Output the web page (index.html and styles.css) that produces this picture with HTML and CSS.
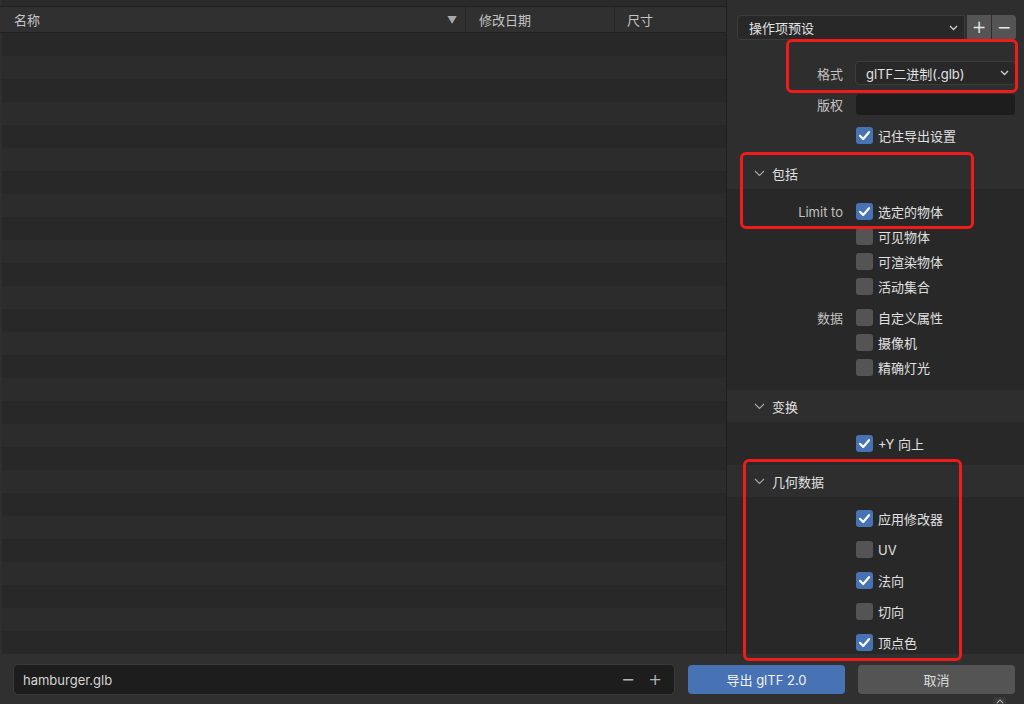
FILE: index.html
```html
<!DOCTYPE html>
<html lang="zh-CN">
<head>
    <meta charset="UTF-8">
    <title>Blender 导出 glTF 2.0</title>
    <link rel="stylesheet" href="styles.css">
</head>
<body>
    <div class="app">
        <div class="browser">
            <div class="list-head">
                <div class="col col-name">名称<span class="sort">▼</span></div>
                <div class="col col-date">修改日期</div>
                <div class="col col-size">尺寸</div>
            </div>
            <div class="list-body"></div>
        </div>

        <div class="sidebar">
            <div class="main-panel">
                <div class="preset-row">
                    <div class="select preset">
                        <span>操作项预设</span>
                        <svg class="caret" viewBox="0 0 9 6"><path d="M1 1l3.5 3.5L8 1"/></svg>
                    </div>
                    <button class="tool-btn">+</button>
                    <button class="tool-btn">−</button>
                </div>

                <div class="prop-row format-row">
                    <span class="label">格式</span>
                    <div class="select">
                        <span>glTF二进制(.glb)</span>
                        <svg class="caret" viewBox="0 0 9 6"><path d="M1 1l3.5 3.5L8 1"/></svg>
                    </div>
                </div>
                <div class="prop-row copyright-row">
                    <span class="label">版权</span>
                    <div class="text-field"></div>
                </div>
                <div class="prop-row remember-row">
                    <span class="label"></span>
                    <label class="check on"><span class="box"><svg viewBox="0 0 17 17"><path d="M4 8.8l3.2 3.2L13 5.2"/></svg></span>记住导出设置</label>
                </div>
            </div>

            <div class="panel">
                <div class="panel-head"><svg class="chev" viewBox="0 0 11 7"><path d="M1 1l4.5 4.5L10 1"/></svg>包括</div>
                <div class="panel-body">
                    <div class="group">
                        <div class="prop-row">
                            <span class="label">Limit to</span>
                            <label class="check on"><span class="box"><svg viewBox="0 0 17 17"><path d="M4 8.8l3.2 3.2L13 5.2"/></svg></span>选定的物体</label>
                        </div>
                        <div class="prop-row"><span class="label"></span><label class="check"><span class="box"></span>可见物体</label></div>
                        <div class="prop-row"><span class="label"></span><label class="check"><span class="box"></span>可渲染物体</label></div>
                        <div class="prop-row"><span class="label"></span><label class="check"><span class="box"></span>活动集合</label></div>
                    </div>
                    <div class="group">
                        <div class="prop-row"><span class="label">数据</span><label class="check"><span class="box"></span>自定义属性</label></div>
                        <div class="prop-row"><span class="label"></span><label class="check"><span class="box"></span>摄像机</label></div>
                        <div class="prop-row"><span class="label"></span><label class="check"><span class="box"></span>精确灯光</label></div>
                    </div>
                </div>
            </div>

            <div class="panel">
                <div class="panel-head"><svg class="chev" viewBox="0 0 11 7"><path d="M1 1l4.5 4.5L10 1"/></svg>变换</div>
                <div class="panel-body compact">
                    <div class="prop-row">
                        <span class="label"></span>
                        <label class="check on"><span class="box"><svg viewBox="0 0 17 17"><path d="M4 8.8l3.2 3.2L13 5.2"/></svg></span>+Y 向上</label>
                    </div>
                </div>
            </div>

            <div class="panel">
                <div class="panel-head"><svg class="chev" viewBox="0 0 11 7"><path d="M1 1l4.5 4.5L10 1"/></svg>几何数据</div>
                <div class="panel-body spaced">
                    <div class="prop-row"><span class="label"></span><label class="check on"><span class="box"><svg viewBox="0 0 17 17"><path d="M4 8.8l3.2 3.2L13 5.2"/></svg></span>应用修改器</label></div>
                    <div class="prop-row"><span class="label"></span><label class="check"><span class="box"></span>UV</label></div>
                    <div class="prop-row"><span class="label"></span><label class="check on"><span class="box"><svg viewBox="0 0 17 17"><path d="M4 8.8l3.2 3.2L13 5.2"/></svg></span>法向</label></div>
                    <div class="prop-row"><span class="label"></span><label class="check"><span class="box"></span>切向</label></div>
                    <div class="prop-row"><span class="label"></span><label class="check on"><span class="box"><svg viewBox="0 0 17 17"><path d="M4 8.8l3.2 3.2L13 5.2"/></svg></span>顶点色</label></div>
                </div>
            </div>
        </div>

        <div class="footer">
            <div class="file-field">
                <span class="file-name">hamburger.glb</span>
                <span class="step">−</span>
                <span class="step">+</span>
            </div>
            <button class="btn primary">导出 glTF 2.0</button>
            <button class="btn">取消</button>
            <div class="region-tab"><svg viewBox="0 0 10 6"><path d="M1 5l4-4 4 4"/></svg></div>
        </div>
    </div>

    <!-- red annotation frames drawn over the screenshot -->
    <div class="mark mark-format"></div>
    <div class="mark mark-include"></div>
    <div class="mark mark-geometry"></div>
</body>
</html>
```

FILE: styles.css
```css
* {
    margin: 0;
    padding: 0;
    box-sizing: border-box;
}

body {
    width: 1024px;
    height: 704px;
    overflow: hidden;
    position: relative;
    background: #303030;
    color: #dcdcdc;
    font-family: Inter, "Noto Sans CJK SC", sans-serif;
    font-size: 13px;
}

.app {
    display: grid;
    grid-template-columns: 727px 297px;
    grid-template-rows: 654px 50px;
    height: 704px;
}

/* file list */

.browser {
    display: flex;
    flex-direction: column;
    background: #2a2a2a;
    padding-top: 6px;
    padding-left: 2px;
    border-right: 1px solid #1e1e1e;
    box-shadow: inset 2px 0 0 #2f2f2f;
}

.list-head {
    display: flex;
    height: 27px;
    background: #303030;
    border-top: 1px solid #202020;
    border-bottom: 1px solid #202020;
    color: #c4c4c4;
    margin-left: -2px;
}

.col {
    display: flex;
    align-items: center;
}

.col-name {
    width: 466px;
    padding-left: 14px;
    justify-content: space-between;
    border-right: 1px solid #262626;
}

.sort {
    font-size: 10px;
    color: #aaa;
    margin-right: 8px;
}

.col-date {
    width: 149px;
    padding-left: 13px;
    border-right: 1px solid #262626;
}

.col-size {
    flex: 1;
    padding-left: 12px;
}

.list-body {
    flex: 1;
    background: repeating-linear-gradient(#282828 0, #282828 23px, #2c2c2c 23px, #2c2c2c 46px);
}

/* sidebar */

.sidebar {
    display: flex;
    flex-direction: column;
    background: #282828;
    overflow: hidden;
}

.main-panel {
    background: #2e2e2e;
    padding: 15px 8px 14px 0;
}

.preset-row {
    display: flex;
    gap: 1px;
    height: 25px;
    margin-left: 10px;
    margin-bottom: 21px;
}

.select {
    flex: 1;
    display: flex;
    align-items: center;
    justify-content: space-between;
    padding: 0 6px 0 11px;
    background: #282828;
    border: 1px solid #3c3c3c;
    border-radius: 4px;
    color: #e2e2e2;
}

.preset {
    border-radius: 4px 0 0 4px;
    margin-right: 1px;
}

.caret {
    width: 9px;
    height: 6px;
    fill: none;
    stroke: #cfcfcf;
    stroke-width: 1.3;
}

.tool-btn {
    width: 24px;
    background: #545454;
    border: none;
    color: #e6e6e6;
    font-family: "DejaVu Sans", sans-serif;
    font-size: 17px;
    line-height: 25px;
}

.tool-btn:last-child {
    border-radius: 0 4px 4px 0;
}

.prop-row {
    display: grid;
    grid-template-columns: 116px 1fr;
    column-gap: 13px;
    align-items: center;
    height: 25px;
}

.label {
    text-align: right;
    color: #c2c2c2;
}

.format-row {
    height: 24px;
    margin-bottom: 8px;
    column-gap: 12px;
}

.format-row .select {
    height: 24px;
    padding-left: 10px;
}

.copyright-row {
    height: 23px;
    margin-bottom: 10px;
    column-gap: 12px;
}

.remember-row {
    height: 17px;
}

.text-field {
    height: 23px;
    background: #1d1d1d;
    border: 1px solid #2f2f2f;
    border-radius: 4px;
}

.check {
    display: flex;
    align-items: center;
    gap: 5px;
    color: #e0e0e0;
}

.box {
    width: 17px;
    height: 17px;
    border-radius: 3px;
    background: #545454;
    display: flex;
}

.check.on .box {
    background: #4772b3;
}

.box svg {
    width: 17px;
    height: 17px;
    fill: none;
    stroke: #fff;
    stroke-width: 2.2;
    stroke-linecap: round;
    stroke-linejoin: round;
}

/* collapsible panels */

.panel-head {
    display: flex;
    align-items: center;
    gap: 7px;
    height: 32px;
    padding-left: 27px;
    background: #2e2e2e;
    color: #e2e2e2;
}

.chev {
    width: 11px;
    height: 7px;
    fill: none;
    stroke: #a8a8a8;
    stroke-width: 1.2;
}

.panel-body {
    padding: 10px 8px 10px 0;
}

.panel-body.compact {
    padding: 9px 8px 9px 0;
}

.group + .group {
    margin-top: 6px;
}

.panel-body.spaced {
    display: flex;
    flex-direction: column;
    gap: 10px;
    padding-top: 11px;
}

.panel-body.spaced .prop-row {
    height: 21px;
}

/* footer */

.footer {
    grid-column: 1 / 3;
    display: flex;
    gap: 13px;
    padding: 10px 9px 0 13px;
    background: #303030;
    position: relative;
}

.file-field {
    flex: 1;
    display: flex;
    align-items: center;
    height: 31px;
    padding: 0 12px 0 9px;
    background: #1d1d1d;
    border: 1px solid #3a3a3a;
    border-radius: 5px;
    color: #d6d6d6;
}

.file-name {
    flex: 1;
}

.step {
    font-family: "DejaVu Sans", sans-serif;
    font-size: 16px;
    color: #b4b4b4;
    margin-left: 14px;
}

.btn {
    width: 157px;
    height: 29px;
    margin-top: 1px;
    border: none;
    border-radius: 4px;
    background: #545454;
    color: #dedede;
    font-family: Inter, "Noto Sans CJK SC", sans-serif;
    font-size: 13px;
}

.btn.primary {
    background: #4772b3;
    color: #f2f2f2;
}

.region-tab {
    position: absolute;
    left: 993px;
    top: 43px;
    width: 13px;
    height: 10px;
    background: #3a3a3a;
    border-radius: 3px 3px 0 0;
    display: flex;
    justify-content: center;
    padding-top: 2px;
}

.region-tab svg {
    width: 8px;
    height: 5px;
    fill: none;
    stroke: #bbb;
    stroke-width: 1.3;
}

/* annotation frames */

.mark {
    position: absolute;
    border: 3px solid #f01c1c;
    border-radius: 6px;
}

.mark-format {
    left: 786px;
    top: 39px;
    width: 232px;
    height: 54px;
}

.mark-include {
    left: 740px;
    top: 152px;
    width: 234px;
    height: 77px;
}

.mark-geometry {
    left: 743px;
    top: 459px;
    width: 219px;
    height: 202px;
}
```
